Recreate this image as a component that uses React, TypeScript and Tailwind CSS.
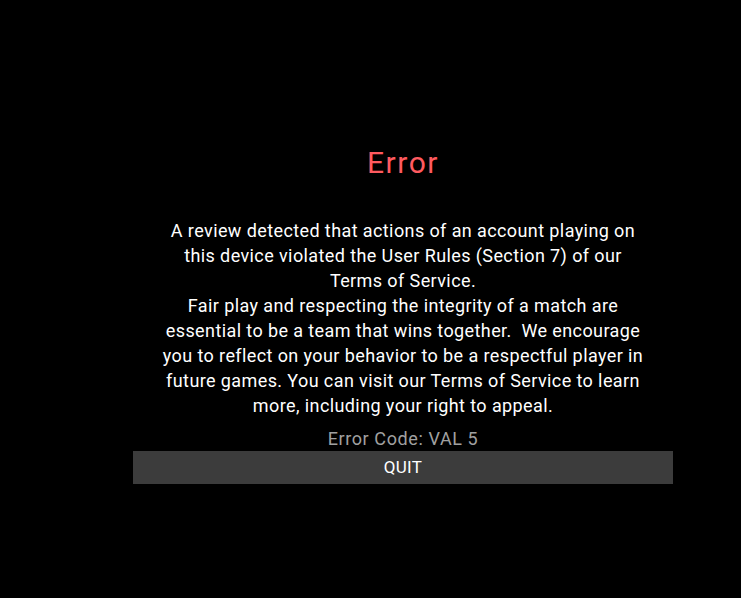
export default function App() {
    const lines = [
        "A review detected that actions of an account playing on",
        "this device violated the User Rules (Section 7) of our",
        "Terms of Service.",
        "Fair play and respecting the integrity of a match are",
        "essential to be a team that wins together.\u00a0 We encourage",
        "you to reflect on your behavior to be a respectful player in",
        "future games. You can visit our Terms of Service to learn",
        "more, including your right to appeal.",
    ];

    return (
        <div className="w-full h-[598px] bg-black text-white font-['Roboto',sans-serif]">
            <div className="ml-[133px] w-[540px] pt-[145px] flex flex-col items-center">
                <h1 className="text-[30px] leading-[36px] tracking-[1.5px] text-[#ff5a5f]">Error</h1>
                <div className="mt-[37px] text-center text-[18px] leading-[25px] tracking-[0.4px] whitespace-nowrap">
                    {lines.map((l) => (
                        <div key={l}>{l}</div>
                    ))}
                </div>
                <div className="mt-[8px] text-[18px] leading-[25px] tracking-[0.6px] text-[#a0a0a0]">Error Code: VAL 5</div>
                <button className="w-full h-[33px] bg-[#3c3c3c] text-[17px] tracking-[0.3px] text-white">QUIT</button>
            </div>
        </div>
    );
}
